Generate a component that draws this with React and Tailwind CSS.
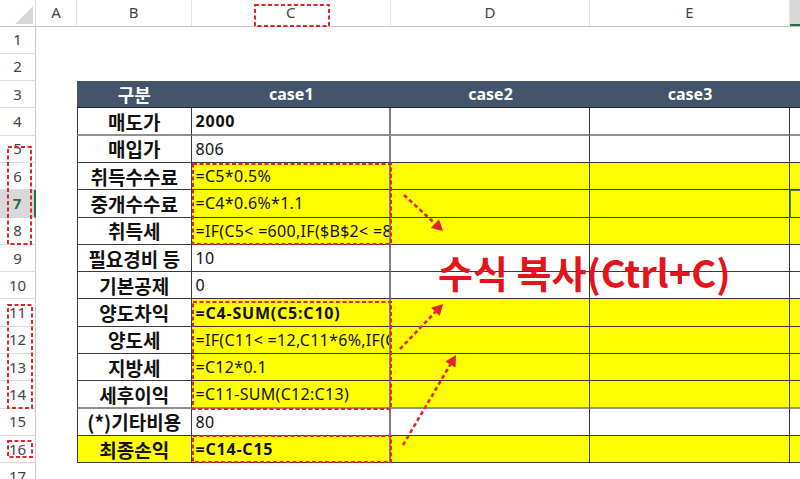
const COLS = "grid grid-cols-[36px_41px_114.5px_199.5px_199px_200px_1fr] grid-rows-[100%]";
const RED = "#e3232b";

const rows = [
  { n: 4, label: "매도가", value: "2000", bold: true, line: "gray" },
  { n: 5, label: "매입가", value: "806" },
  { n: 6, label: "취득수수료", value: "=C5*0.5%", yellow: true },
  { n: 7, label: "중개수수료", value: "=C4*0.6%*1.1", yellow: true, selected: true },
  { n: 8, label: "취득세", value: "=IF(C5< =600,IF($B$2< =85,C5*1.1%,C5*1.3%))", yellow: true },
  { n: 9, label: "필요경비 등", value: "10" },
  { n: 10, label: "기본공제", value: "0" },
  { n: 11, label: "양도차익", value: "=C4-SUM(C5:C10)", bold: true, yellow: true },
  { n: 12, label: "양도세", value: "=IF(C11< =12,C11*6%,IF(C11< =46,C11*15%))", yellow: true },
  { n: 13, label: "지방세", value: "=C12*0.1", yellow: true },
  { n: 14, label: "세후이익", value: "=C11-SUM(C12:C13)", yellow: true, line: "gray" },
  { n: 15, label: "(*)기타비용", value: "80" },
  { n: 16, label: "최종손익", value: "=C14-C15", bold: true, yellow: true, labelYellow: true },
];

function RowHead({ n, selected }) {
  return (
    <div
      className={
        selected
          ? "flex items-center justify-center bg-[#d9d9d9] border-b border-[#d4d4d4] border-r-2 border-r-[#217346] text-[15px] leading-none font-bold text-[#217346]"
          : "flex items-center justify-center bg-white border-b border-[#dcdcdc] border-r border-r-[#c8c8c8] text-[15px] leading-none text-[#444]"
      }
    >
      {n}
    </div>
  );
}

function EmptyRow({ n }) {
  return (
    <div className={`${COLS} h-[27.3px]`}>
      <RowHead n={n} />
      <div />
      <div />
      <div />
      <div />
      <div />
      <div />
    </div>
  );
}

function Arrow({ x1, y1, x2, y2 }) {
  const dx = x2 - x1;
  const dy = y2 - y1;
  const len = Math.hypot(dx, dy);
  const ux = dx / len;
  const uy = dy / len;
  const h = 11;
  const w = 6;
  const bx = x2 - ux * h;
  const by = y2 - uy * h;
  const pts = `${x2},${y2} ${bx - uy * w},${by + ux * w} ${bx + uy * w},${by - ux * w}`;
  return (
    <g>
      <line x1={x1} y1={y1} x2={bx} y2={by} stroke={RED} strokeWidth="2.6" strokeDasharray="4 3" />
      <polygon points={pts} fill={RED} />
    </g>
  );
}

function Box({ x, y, w, h }) {
  return <rect x={x} y={y} width={w} height={h} fill="none" stroke={RED} strokeWidth="2" strokeDasharray="4 2.5" />;
}

export default function App() {
  return (
    <div className="relative w-[800px] h-[479px] overflow-hidden bg-white font-['Noto_Sans','Noto_Sans_CJK_KR',sans-serif] text-[#111]">
      {/* column headers */}
      <div className={`${COLS} h-[26.5px] border-b border-[#c6c6c6] text-[15px] leading-none text-[#444]`}>
        <div className="relative border-r border-[#dcdcdc]">
          <svg className="absolute inset-0" width="36" height="26">
            <polygon points="15,24 33,24 33,6" fill="#d8d8d8" />
          </svg>
        </div>
        <div className="flex items-center justify-center border-r border-[#e3e3e3]">A</div>
        <div className="flex items-center justify-center border-r border-[#e3e3e3]">B</div>
        <div className="flex items-center justify-center border-r border-[#e3e3e3]">C</div>
        <div className="flex items-center justify-center border-r border-[#e3e3e3]">D</div>
        <div className="flex items-center justify-center border-r border-[#e3e3e3]">E</div>
        <div className="bg-[#d9d9d9] border-b-2 border-[#217346]" />
      </div>

      <EmptyRow n={1} />
      <EmptyRow n={2} />

      {/* table header */}
      <div className={`${COLS} h-[27.3px] leading-none`}>
        <RowHead n={3} />
        <div />
        <div className="flex items-center justify-center bg-[#44546a] border-b border-[#222] text-white font-bold text-[18px] font-['Noto_Sans_CJK_KR',sans-serif]">구분</div>
        <div className="flex items-center justify-center bg-[#44546a] border-b border-[#222] text-white font-bold text-[16px]">case1</div>
        <div className="flex items-center justify-center bg-[#44546a] border-b border-[#222] text-white font-bold text-[16px]">case2</div>
        <div className="flex items-center justify-center bg-[#44546a] border-b border-[#222] text-white font-bold text-[16px]">case3</div>
        <div className="bg-[#44546a] border-b border-[#222]" />
      </div>

      {rows.map((r) => {
        const bottom = r.line === "gray" ? "border-b-2 border-b-[#8f8f8f]" : "border-b border-b-[#3a3a3a]";
        const fill = r.yellow ? "bg-[#ffff00]" : "bg-white";
        return (
          <div key={r.n} className={`${COLS} h-[27.3px] leading-none`}>
            <RowHead n={r.n} selected={r.selected} />
            <div />
            <div
              className={`flex items-center justify-center border-l border-r border-[#3a3a3a] ${bottom} ${
                r.labelYellow ? "bg-[#ffff00]" : "bg-white"
              } font-['Noto_Sans_CJK_KR',sans-serif] font-bold text-[19px] whitespace-nowrap`}
            >
              {r.label}
            </div>
            <div
              className={`flex items-center overflow-hidden whitespace-nowrap pl-[4px] border-r-2 border-r-[#7f7f7f] ${bottom} ${fill} text-[16px] ${
                r.bold ? "font-bold tracking-[0.8px]" : "tracking-[0.3px]"
              }`}
            >
              {r.value}
            </div>
            <div className={`border-r border-r-[#3a3a3a] ${bottom} ${fill}`} />
            <div className={`border-r border-r-[#3a3a3a] ${bottom} ${fill}`} />
            <div
              className={`${bottom} ${fill} ${
                r.selected ? "border-l border-t border-[#3f8a3f]" : ""
              }`}
            />
          </div>
        );
      })}

      <EmptyRow n={17} />

      {/* annotations */}
      <svg className="absolute inset-0 pointer-events-none" width="800" height="479">
        <Box x={255} y={5} w={74} h={21} />
        <Box x={8} y={147} w={23} h={97} />
        <Box x={8} y={305} w={24} h={103} />
        <Box x={8} y={441} w={24} h={16} />
        <Box x={193} y={164} w={198} h={80} />
        <Box x={193} y={302} w={198} h={107} />
        <Box x={193} y={436} w={198} h={26} />
        <Arrow x1={404} y1={195} x2={443} y2={231} />
        <Arrow x1={400} y1={349} x2={443} y2={304} />
        <Arrow x1={403} y1={445} x2={456} y2={355} />
      </svg>
      <div className="absolute left-[438px] top-[253px] text-[38px] leading-none font-bold text-[#e3141c] font-['Noto_Sans_CJK_KR',sans-serif] whitespace-nowrap">
        수식 복사(Ctrl+C)
      </div>
    </div>
  );
}
